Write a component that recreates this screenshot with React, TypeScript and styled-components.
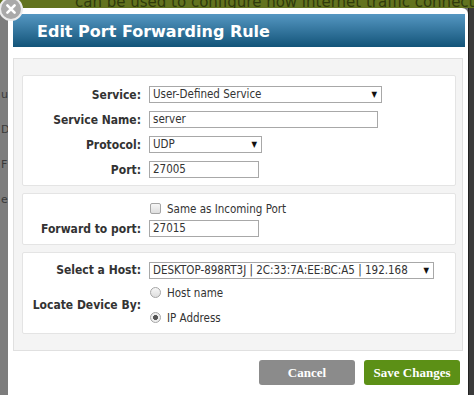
import styled, { createGlobalStyle } from 'styled-components';

const Global = createGlobalStyle`
  html, body { margin: 0; padding: 0; background: #6e6e6e; }
  * { box-sizing: border-box; }
`;

const App = () => (
  <Page>
    <Global />
    <TopStrip>can be used to configure how internet traffic connects to devices within your network</TopStrip>
    <Body>
      <LeftStrip>
        <Ghost>u</Ghost>
        <Ghost>D</Ghost>
        <Ghost>F</Ghost>
        <Ghost>e</Ghost>
      </LeftStrip>
      <Modal>
        <Close>
          <svg width="12" height="12" viewBox="0 0 10 10">
            <path d="M2 2 L8 8 M8 2 L2 8" stroke="#fff" strokeWidth="2.2" strokeLinecap="round" />
          </svg>
        </Close>
        <Header>Edit Port Forwarding Rule</Header>
        <Panel>
          <Section $pad="6px 0 3px">
            <Row $h={25}>
              <Label>Service:</Label>
              <Select $w={233}>User-Defined Service<Arrow>▼</Arrow></Select>
            </Row>
            <Row $h={25}>
              <Label>Service Name:</Label>
              <Input $w={229}>server</Input>
            </Row>
            <Row $h={25}>
              <Label>Protocol:</Label>
              <Select $w={113}>UDP<Arrow>▼</Arrow></Select>
            </Row>
            <Row $h={25}>
              <Label>Port:</Label>
              <Input $w={110}>27005</Input>
            </Row>
          </Section>
          <Section $pad="5px 0 5px">
            <Row $h={19}>
              <span />
              <Choice><Check />Same as Incoming Port</Choice>
            </Row>
            <Row $h={21}>
              <Label>Forward to port:</Label>
              <Input $w={110}>27015</Input>
            </Row>
          </Section>
          <Section $pad="7px 0 3px">
            <Row $h={20}>
              <Label>Select a Host:</Label>
              <Select $w={285}>DESKTOP-898RT3J | 2C:33:7A:EE:BC:A5 | 192.168<Arrow>▼</Arrow></Select>
            </Row>
            <RadioGroup>
              <Label $span>Locate Device By:</Label>
              <Choice><Radio />Host name</Choice>
              <Choice><Radio $on />IP Address</Choice>
            </RadioGroup>
          </Section>
        </Panel>
        <Footer>
          <Button $bg="#8b8b8b">Cancel</Button>
          <Button $bg="#5c9016">Save Changes</Button>
        </Footer>
      </Modal>
      <RightStrip />
    </Body>
  </Page>
);

const Page = styled.div`
  position: relative;
  width: 474px;
  height: 395px;
  overflow: hidden;
  display: flex;
  flex-direction: column;
  background: #6e6e6e;
`;

const TopStrip = styled.div`
  height: 8px;
  flex: none;
  background: #62731f;
  color: #2f3a0c;
  font: 15px "DejaVu Sans", sans-serif;
  line-height: 4px;
  white-space: nowrap;
  overflow: hidden;
  padding-left: 75px;
`;

const Body = styled.div`
  flex: 1;
  display: flex;
  min-height: 0;
`;

const LeftStrip = styled.div`
  width: 8px;
  flex: none;
  background: #7d7d7d;
  display: flex;
  flex-direction: column;
  gap: 22px;
  padding-top: 80px;
  overflow: hidden;
`;

const Ghost = styled.span`
  font: 11px "DejaVu Sans", sans-serif;
  color: #3a3a3a;
  padding-left: 1px;
`;

const RightStrip = styled.div`
  width: 6px;
  flex: none;
  background: #3b3b3b;
  border-left: 1px solid #222;
`;

const Modal = styled.div`
  position: relative;
  flex: 1;
  background: #fff;
  border-top-right-radius: 6px;
  padding: 6px 3px 0 5px;
  display: flex;
  flex-direction: column;
`;

const Close = styled.div`
  position: absolute;
  z-index: 5;
  left: -9px;
  top: -11px;
  width: 24px;
  height: 24px;
  border-radius: 50%;
  background: #a9a9a9;
  border: 2px solid #ececec;
  display: flex;
  align-items: center;
  justify-content: center;
`;

const Header = styled.div`
  height: 33px;
  background: linear-gradient(#5597c2, #135479);
  color: #fff;
  font: bold 16px "DejaVu Sans", sans-serif;
  display: flex;
  align-items: center;
  padding-left: 24px;
  padding-top: 1px;
`;

const Panel = styled.div`
  margin: 11px 2px 0 0;
  background: #f4f4f4;
  border: 1px solid #e0e0e0;
  padding: 16px 6px 16px 8px;
  display: flex;
  flex-direction: column;
  gap: 7px;
`;

const Section = styled.div<{ $pad: string }>`
  background: #fff;
  border: 1px solid #e4e4e4;
  border-radius: 2px;
  padding: ${(p) => p.$pad};
`;

const Row = styled.div<{ $h: number }>`
  height: ${(p) => p.$h}px;
  display: grid;
  grid-template-columns: 118px 1fr;
  column-gap: 8px;
  align-items: center;
`;

const RadioGroup = styled.div`
  display: grid;
  grid-template-columns: 118px 1fr;
  grid-template-rows: 25px 25px;
  column-gap: 8px;
  align-items: center;
`;

const Label = styled.div<{ $span?: boolean }>`
  text-align: right;
  font: bold 12px "DejaVu Sans Condensed", "Liberation Sans", sans-serif;
  font-stretch: condensed;
  color: #333;
  white-space: nowrap;
  ${(p) => (p.$span ? 'grid-row: 1 / 3;' : '')}
`;

const fieldText = `
  font: 11.5px "DejaVu Sans Condensed", "DejaVu Sans", sans-serif;
  font-stretch: condensed;
  color: #333;
`;

const Input = styled.div<{ $w: number }>`
  ${fieldText}
  width: ${(p) => p.$w}px;
  height: 17px;
  border: 1px solid #a8a8a8;
  background: #fff;
  padding: 0 3px;
  line-height: 15px;
  white-space: nowrap;
`;

const Select = styled(Input)`
  position: relative;
  overflow: hidden;
  padding-right: 14px;
`;

const Arrow = styled.span`
  position: absolute;
  right: 4px;
  top: 0;
  font-size: 8px;
  color: #111;
  background: #fff;
  padding-left: 2px;
`;

const Choice = styled.div`
  ${fieldText}
  display: flex;
  align-items: center;
  gap: 6px;
  padding-left: 1px;
`;

const Check = styled.span`
  width: 11px;
  height: 11px;
  border: 1px solid #a5a5a5;
  border-radius: 2px;
  background: linear-gradient(#f6f6f6, #dedede);
`;

const Radio = styled.span<{ $on?: boolean }>`
  width: 11px;
  height: 11px;
  border-radius: 50%;
  border: 1px solid #a5a5a5;
  background: ${(p) =>
    p.$on ? 'radial-gradient(circle, #555 0 2.2px, #eee 2.8px)' : 'linear-gradient(#f6f6f6, #dedede)'};
`;

const Footer = styled.div`
  display: flex;
  justify-content: flex-end;
  gap: 9px;
  padding: 9px 5px 0 0;
`;

const Button = styled.div<{ $bg: string }>`
  width: 96px;
  height: 25px;
  border-radius: 3px;
  background: ${(p) => p.$bg};
  color: #fff;
  font: bold 13px "Liberation Serif", serif;
  display: flex;
  align-items: center;
  justify-content: center;
`;

export default App;
